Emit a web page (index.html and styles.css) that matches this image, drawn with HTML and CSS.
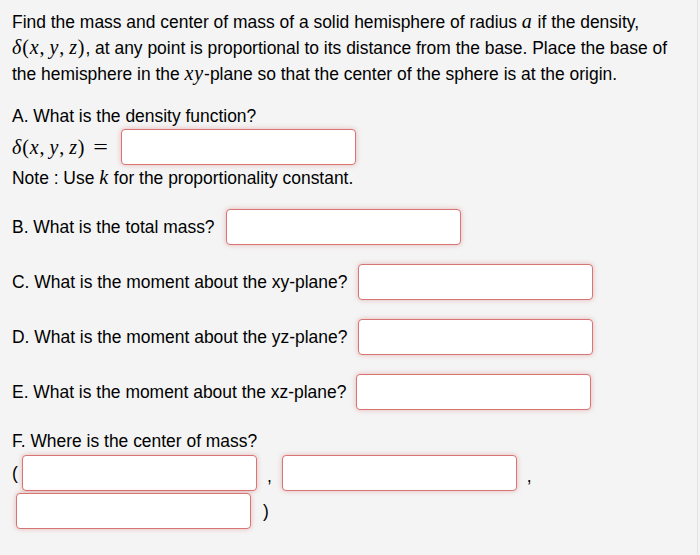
FILE: index.html
```html
<!DOCTYPE html>
<html>
<head>
<meta charset="utf-8">
<link rel="stylesheet" href="styles.css">
</head>
<body>
<div class="problem">
  <p class="intro">Find the mass and center of mass of a solid hemisphere of radius <span class="m"><i>a</i></span> if the density, <span class="m"><i>δ</i>(<i>x</i>,<span class="th"></span><i>y</i>,<span class="th"></span><i>z</i>)</span>, at any point is proportional to its distance from the base. Place the base of the hemisphere in the <span class="m"><i>x</i><i>y</i></span>-plane so that the center of the sphere is at the origin.</p>

  <div class="qa">
    <div class="line">A. What is the density function?</div>
    <div class="row">
      <span class="m"><i>δ</i>(<i>x</i>,<span class="th"></span><i>y</i>,<span class="th"></span><i>z</i>)<span class="eq">=</span></span>
      <input class="ans a-in" type="text">
    </div>
    <div class="line">Note : Use <span class="m"><i>k</i></span> for the proportionality constant.</div>
  </div>

  <div class="row q-b">
    <span>B. What is the total mass?</span>
    <input class="ans" type="text">
  </div>

  <div class="row q">
    <span>C. What is the moment about the xy-plane?</span>
    <input class="ans" type="text">
  </div>

  <div class="row q">
    <span>D. What is the moment about the yz-plane?</span>
    <input class="ans" type="text">
  </div>

  <div class="row q">
    <span>E. What is the moment about the xz-plane?</span>
    <input class="ans ans-e" type="text">
  </div>

  <div class="line q-f">F. Where is the center of mass?</div>
  <div class="coords">
    <span class="paren">(</span>
    <input class="ans c1" type="text">
    <span class="sep">,</span>
    <input class="ans" type="text">
    <span class="sep">,</span>
    <input class="ans c3" type="text">
    <span class="close">)</span>
  </div>
</div>
</body>
</html>
```
FILE: styles.css
```css
html, body {
  margin: 0;
  padding: 0;
  background: #f4f4f4;
}
body {
  font-family: "Liberation Sans", Arial, sans-serif;
  font-size: 17.45px;
  color: #000;
}
.problem {
  width: 673px;
  height: 535px;
  padding: 9px 12px 10px 12px;
  border-right: 1px solid #e2e2e2;
}
.intro {
  margin: 0;
  line-height: 26px;
}
.m {
  font-family: "Liberation Serif", "Times New Roman", serif;
  font-size: 20px;
  line-height: 1;
  letter-spacing: 0.9px;
  white-space: nowrap;
}
.m i {
  font-style: italic;
}
.th {
  display: inline-block;
  width: 4px;
}
.eq {
  display: inline-block;
  margin-left: 10px;
  transform: scaleX(1.3);
  font-style: normal;
}
.qa {
  margin-top: 16px;
}
.line {
  line-height: 26px;
}
.row {
  display: flex;
  align-items: center;
  height: 36px;
}
.row .ans {
  margin-left: 11px;
}
.row .a-in {
  margin-left: 13px;
}
.ans {
  box-sizing: border-box;
  width: 235px;
  height: 36px;
  margin: 0;
  padding: 4px 8px;
  background: #fff;
  border: 1px solid #d77474;
  border-radius: 4px;
  box-shadow: 0 0 5px rgba(200, 70, 70, 0.35);
  font-size: 16px;
  outline: none;
}
.q-b {
  margin-top: 18px;
}
.q {
  margin-top: 19px;
}
.row .ans-e {
  margin-left: 10px;
}
.q-f {
  margin-top: 18px;
}
.coords {
  display: flex;
  flex-wrap: wrap;
  align-items: center;
  row-gap: 2px;
  margin-top: 1px;
}
.paren {
  width: 5px;
}
.c1 {
  margin-left: 5px;
}
.sep {
  margin: 6px 10px 0 10px;
}
.c3 {
  margin-left: 4px;
}
.close {
  margin-left: 12px;
}
```
